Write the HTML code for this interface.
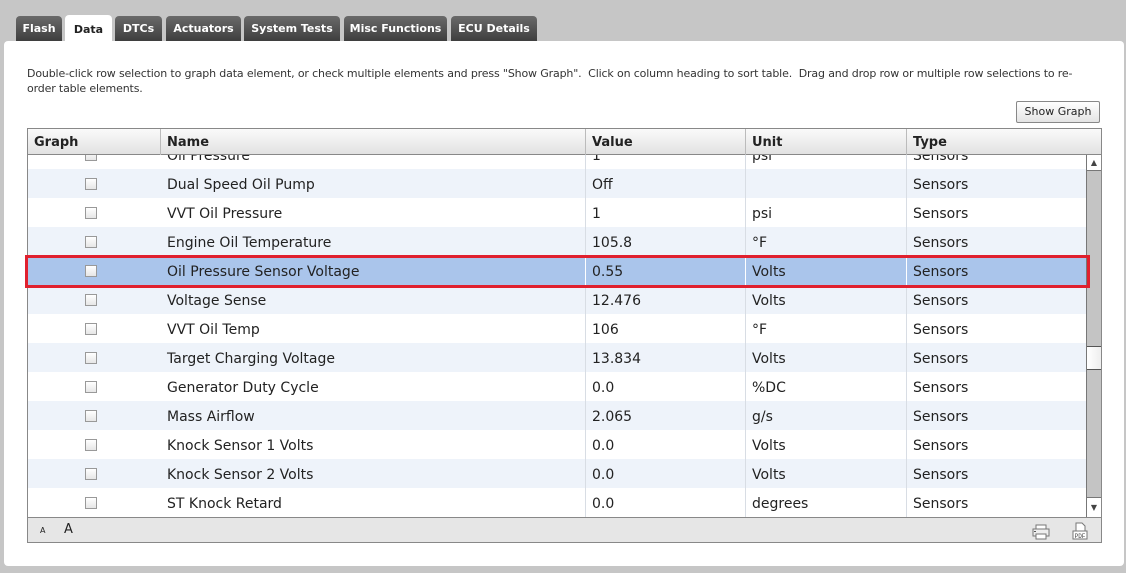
<!DOCTYPE html>
<html><head><meta charset="utf-8"><style>
*{box-sizing:border-box;margin:0;padding:0}
body{width:1126px;height:573px;background:#c6c6c6;font-family:"DejaVu Sans","Liberation Sans",sans-serif;position:relative;overflow:hidden}
.tab{position:absolute;top:16px;height:25px;background:linear-gradient(#6a6a6a,#3e3e3e);color:#fff;font-weight:bold;font-size:11px;line-height:25px;text-align:center;border-radius:4px 4px 0 0}
.tab.act{background:#fff;color:#222;top:15px;height:27px;line-height:29px}
.panel{position:absolute;left:4px;top:41px;width:1120px;height:525px;background:#fff;border-radius:4px}
.desc{position:absolute;left:27px;top:66px;font-size:11px;color:#333;line-height:15px;width:1090px;white-space:nowrap;letter-spacing:-0.15px}
.btn{position:absolute;left:1016px;top:101px;width:84px;height:22px;border:1px solid #888;border-radius:2px;background:linear-gradient(#fff,#e4e4e4);font-size:11px;line-height:20px;text-align:center;color:#222}
.tbl{position:absolute;left:27px;top:128px;width:1075px;height:415px;border:1px solid #888;overflow:hidden}
.hdr{position:absolute;left:0;top:0;width:100%;height:26px;background:linear-gradient(#fafafa,#e2e2e2);border-bottom:1px solid #888;z-index:2}
.hdr div{position:absolute;top:0;height:26px;line-height:28px;font-weight:bold;font-size:13px;color:#222;padding-left:6px;border-right:1px solid #bbb}
.body{position:absolute;left:0;top:26px;width:1058px;height:362px;overflow:hidden}
.row{position:absolute;left:0;width:1058px;height:29px;font-size:14px;color:#222}
.row.l{background:#eef3fa}.row.s{background:#aac5eb}
.row div{position:absolute;top:0;height:29px;line-height:33px;padding-left:6px;border-right:1px solid #d8dde4}
.cb{position:absolute;left:57px;top:9px;width:12px;height:12px;border:1px solid #999;background:linear-gradient(#fff,#e6e6e6)}
.sb{position:absolute;left:1058px;top:26px;width:15px;height:362px;background:#c4c4c4;border-left:1px solid #777}
.foot{position:absolute;left:0;top:388px;width:100%;height:26px;background:#e6e6e6;border-top:1px solid #888}
.red{position:absolute;left:25px;top:255px;width:1065px;height:33px;border:3px solid #e0202e;z-index:5}
</style></head><body>
<div class="tab" style="left:16px;width:46px">Flash</div>
<div class="tab act" style="left:65px;width:47px">Data</div>
<div class="tab" style="left:115px;width:47px">DTCs</div>
<div class="tab" style="left:166px;width:75px">Actuators</div>
<div class="tab" style="left:244px;width:96px">System Tests</div>
<div class="tab" style="left:344px;width:103px">Misc Functions</div>
<div class="tab" style="left:451px;width:86px">ECU Details</div>
<div class="panel"></div>
<div class="desc">Double-click row selection to graph data element, or check multiple elements and press "Show Graph".&nbsp; Click on column heading to sort table.&nbsp; Drag and drop row or multiple row selections to re-<br>order table elements.</div>
<div class="btn">Show Graph</div>
<div class="tbl">
<div class="hdr"><div style="left:0;width:133px">Graph</div><div style="left:133px;width:425px">Name</div><div style="left:558px;width:160px">Value</div><div style="left:718px;width:161px">Unit</div><div style="left:879px;width:196px;border:0">Type</div></div>
<div class="body">
<div class="row" style="top:-15px"><span class="cb"></span><div style="left:133px;width:425px">Oil Pressure</div><div style="left:558px;width:160px">1</div><div style="left:718px;width:161px">psi</div><div style="left:879px;width:179px;border:0">Sensors</div></div>
<div class="row l" style="top:14px"><span class="cb"></span><div style="left:133px;width:425px">Dual Speed Oil Pump</div><div style="left:558px;width:160px">Off</div><div style="left:718px;width:161px"></div><div style="left:879px;width:179px;border:0">Sensors</div></div>
<div class="row" style="top:43px"><span class="cb"></span><div style="left:133px;width:425px">VVT Oil Pressure</div><div style="left:558px;width:160px">1</div><div style="left:718px;width:161px">psi</div><div style="left:879px;width:179px;border:0">Sensors</div></div>
<div class="row l" style="top:72px"><span class="cb"></span><div style="left:133px;width:425px">Engine Oil Temperature</div><div style="left:558px;width:160px">105.8</div><div style="left:718px;width:161px">°F</div><div style="left:879px;width:179px;border:0">Sensors</div></div>
<div class="row s" style="top:101px"><span class="cb"></span><div style="left:133px;width:425px;border-color:#fff">Oil Pressure Sensor Voltage</div><div style="left:558px;width:160px;border-color:#fff">0.55</div><div style="left:718px;width:161px;border-color:#fff">Volts</div><div style="left:879px;width:179px;border:0">Sensors</div></div>
<div class="row l" style="top:130px"><span class="cb"></span><div style="left:133px;width:425px">Voltage Sense</div><div style="left:558px;width:160px">12.476</div><div style="left:718px;width:161px">Volts</div><div style="left:879px;width:179px;border:0">Sensors</div></div>
<div class="row" style="top:159px"><span class="cb"></span><div style="left:133px;width:425px">VVT Oil Temp</div><div style="left:558px;width:160px">106</div><div style="left:718px;width:161px">°F</div><div style="left:879px;width:179px;border:0">Sensors</div></div>
<div class="row l" style="top:188px"><span class="cb"></span><div style="left:133px;width:425px">Target Charging Voltage</div><div style="left:558px;width:160px">13.834</div><div style="left:718px;width:161px">Volts</div><div style="left:879px;width:179px;border:0">Sensors</div></div>
<div class="row" style="top:217px"><span class="cb"></span><div style="left:133px;width:425px">Generator Duty Cycle</div><div style="left:558px;width:160px">0.0</div><div style="left:718px;width:161px">%DC</div><div style="left:879px;width:179px;border:0">Sensors</div></div>
<div class="row l" style="top:246px"><span class="cb"></span><div style="left:133px;width:425px">Mass Airflow</div><div style="left:558px;width:160px">2.065</div><div style="left:718px;width:161px">g/s</div><div style="left:879px;width:179px;border:0">Sensors</div></div>
<div class="row" style="top:275px"><span class="cb"></span><div style="left:133px;width:425px">Knock Sensor 1 Volts</div><div style="left:558px;width:160px">0.0</div><div style="left:718px;width:161px">Volts</div><div style="left:879px;width:179px;border:0">Sensors</div></div>
<div class="row l" style="top:304px"><span class="cb"></span><div style="left:133px;width:425px">Knock Sensor 2 Volts</div><div style="left:558px;width:160px">0.0</div><div style="left:718px;width:161px">Volts</div><div style="left:879px;width:179px;border:0">Sensors</div></div>
<div class="row" style="top:333px"><span class="cb"></span><div style="left:133px;width:425px">ST Knock Retard</div><div style="left:558px;width:160px">0.0</div><div style="left:718px;width:161px">degrees</div><div style="left:879px;width:179px;border:0">Sensors</div></div>
</div>
<div class="sb">
<div style="position:absolute;left:0;top:0;width:14px;height:16px;background:#fff;font-size:8px;text-align:center;line-height:16px;color:#444;border-bottom:1px solid #777">▲</div>
<div style="position:absolute;left:0;top:191px;width:14px;height:24px;background:linear-gradient(90deg,#fff,#eee);border-top:1px solid #555;border-bottom:1px solid #555"></div>
<div style="position:absolute;left:0;top:342px;width:14px;height:20px;background:#fff;font-size:8px;text-align:center;line-height:20px;color:#444;border-top:1px solid #777">▼</div>
</div>
<div class="foot">
<span style="position:absolute;left:12px;top:8px;font-size:8px;color:#222">A</span>
<span style="position:absolute;left:36px;top:4px;font-size:13px;color:#222">A</span>
<svg style="position:absolute;left:1004px;top:6px" width="18" height="16" viewBox="0 0 18 16"><rect x="4" y="1" width="10" height="5" fill="#fff" stroke="#777"/><rect x="1" y="5" width="16" height="7" fill="#eee" stroke="#777"/><rect x="4" y="10" width="10" height="5" fill="#fff" stroke="#777"/><rect x="2" y="7" width="2" height="1" fill="#555"/></svg>
<svg style="position:absolute;left:1044px;top:4px" width="16" height="18" viewBox="0 0 16 18"><path d="M4 1h6l3 3v5H4z" fill="#fff" stroke="#777"/><rect x="1" y="9" width="14" height="8" fill="#fff" stroke="#777"/><text x="8" y="16" font-size="6" text-anchor="middle" fill="#444" font-family="Liberation Mono,monospace">PDF</text></svg>
</div>
</div>
<div class="red"></div>
</body></html>
